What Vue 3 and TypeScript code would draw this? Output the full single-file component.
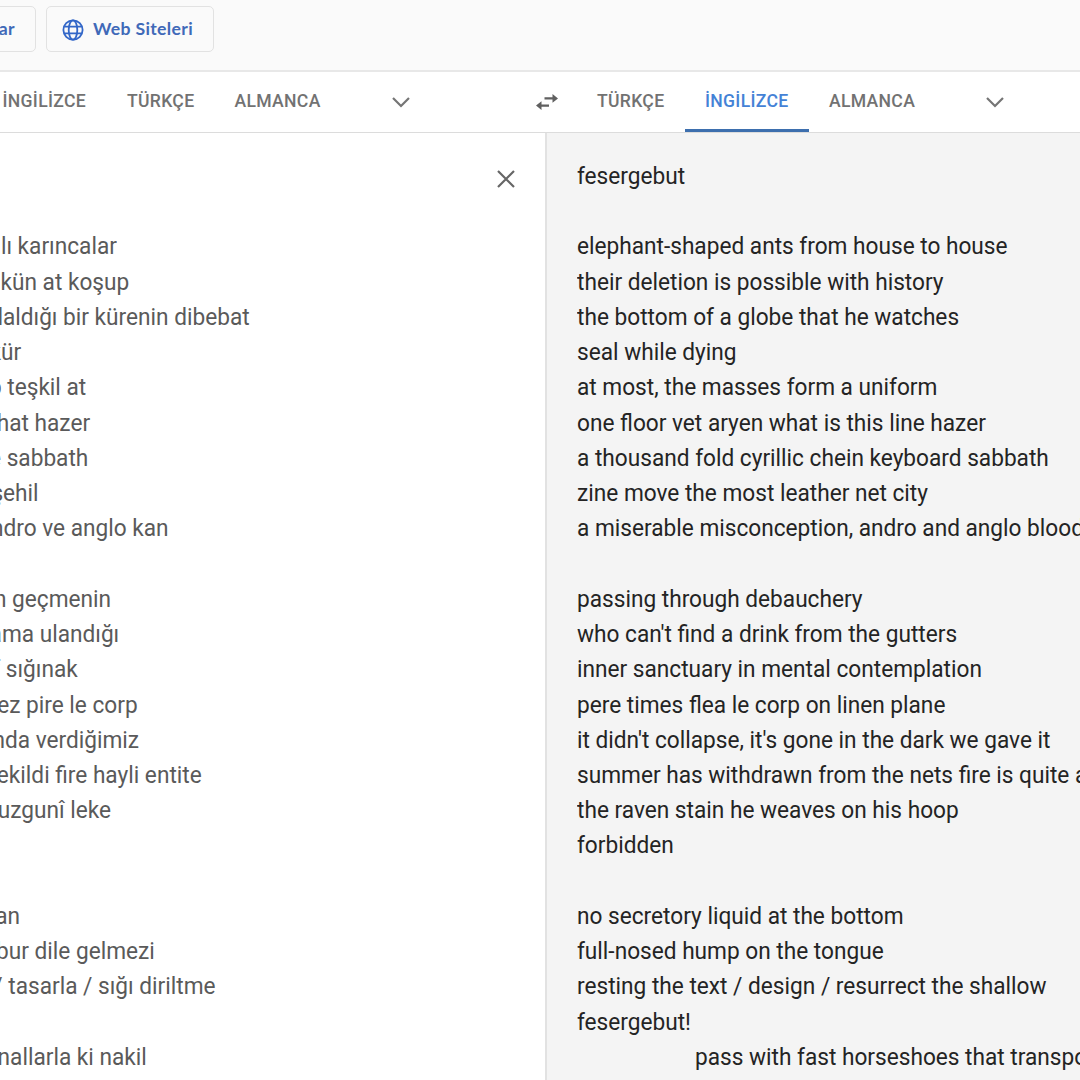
<script setup lang="ts">
interface SourceLine {
  text: string
  end: number
}

// Source lines run in from beyond the left edge; `end` is where each line stops.
const source: SourceLine[] = [
  { text: '', end: 0 },
  { text: '', end: 0 },
  { text: 'lı karıncalar', end: 116.5 },
  { text: 'kün at koşup', end: 129 },
  { text: 'daldığı bir kürenin dibebat', end: 249.5 },
  { text: 'kür', end: 21.2 },
  { text: 'p teşkil at', end: 86 },
  { text: 'hat hazer', end: 90 },
  { text: 'e sabbath', end: 88 },
  { text: 'şehil', end: 39 },
  { text: 'andro ve anglo kan', end: 168.5 },
  { text: '', end: 0 },
  { text: 'n geçmenin', end: 111.5 },
  { text: 'ama ulandığı', end: 119.5 },
  { text: 'f sığınak', end: 77.5 },
  { text: 'ez pire le corp', end: 138 },
  { text: 'nda verdiğimiz', end: 139 },
  { text: 'çekildi fire hayli entite', end: 202 },
  { text: 'kuzgunî leke', end: 111 },
  { text: '', end: 0 },
  { text: '', end: 0 },
  { text: 'an', end: 20.5 },
  { text: 'bur dile gelmezi', end: 154.5 },
  { text: '/ tasarla / sığı diriltme', end: 216 },
  { text: '', end: 0 },
  { text: 'nallarla ki nakil', end: 146.5 },
]

const translation: string[] = [
  'fesergebut',
  '',
  'elephant-shaped ants from house to house',
  'their deletion is possible with history',
  'the bottom of a globe that he watches',
  'seal while dying',
  'at most, the masses form a uniform',
  'one floor vet aryen what is this line hazer',
  'a thousand fold cyrillic chein keyboard sabbath',
  'zine move the most leather net city',
  'a miserable misconception, andro and anglo blood',
  '',
  'passing through debauchery',
  "who can't find a drink from the gutters",
  'inner sanctuary in mental contemplation',
  'pere times flea le corp on linen plane',
  "it didn't collapse, it's gone in the dark we gave it",
  'summer has withdrawn from the nets fire is quite a',
  'the raven stain he weaves on his hoop',
  'forbidden',
  '',
  'no secretory liquid at the bottom',
  'full-nosed hump on the tongue',
  'resting the text / design / resurrect the shallow',
  'fesergebut!',
  'pass with fast horseshoes that transport',
]
</script>

<template>
  <div class="page">
    <header class="modes">
      <button class="mode mode-docs">ar</button>
      <button class="mode mode-sites">
        <svg class="globe" viewBox="0 0 22 22" fill="none" stroke="#3367c8" stroke-width="1.8">
          <circle cx="11" cy="11" r="9.6" />
          <ellipse cx="11" cy="11" rx="4.3" ry="9.6" />
          <path d="M2 7.6h18M2 14.4h18" />
        </svg>
        <span>Web Siteleri</span>
      </button>
    </header>

    <nav class="langs">
      <div class="side side-source">
        <span class="lang l1">İNGİLİZCE</span>
        <span class="lang l2">TÜRKÇE</span>
        <span class="lang l3">ALMANCA</span>
        <svg class="chev" viewBox="0 0 20 12"><path d="M2 2l8 8 8-8" /></svg>
      </div>
      <svg class="swap" viewBox="0 0 24 18">
        <path class="line" d="M9.5 5.4H19M14 12.6H5" />
        <path class="head" d="M17.5 1L23 5.4l-5.5 4.4zM6.5 8.2L1 12.6 6.5 17z" />
      </svg>
      <div class="side side-target">
        <span class="lang r1">TÜRKÇE</span>
        <span class="lang r2 active">İNGİLİZCE</span>
        <span class="lang r3">ALMANCA</span>
        <svg class="chev" viewBox="0 0 20 12"><path d="M2 2l8 8 8-8" /></svg>
      </div>
    </nav>

    <main class="panes">
      <section class="pane source">
        <div class="lines">
          <p v-for="(line, i) in source" :key="i" class="line-row" :style="{ width: line.end + 'px' }">
            <span>{{ line.text }}</span>
          </p>
        </div>
        <svg class="close" viewBox="0 0 20 20"><path d="M2 2l16 16M18 2L2 18" /></svg>
      </section>
      <section class="pane target">
        <p v-for="(line, i) in translation" :key="i" class="line-row" :class="{ indented: i === 25 }">
          <span>{{ line }}</span>
        </p>
      </section>
    </main>
  </div>
</template>

<style>
body {
  margin: 0;
}
</style>

<style scoped>
.page {
  width: 1080px;
  height: 1080px;
  overflow: hidden;
  display: flex;
  flex-direction: column;
  background: #fff;
  font-family: Roboto, sans-serif;
}
.modes {
  box-sizing: border-box;
  flex: none;
  height: 70px;
  display: flex;
  gap: 10px;
  padding-top: 6px;
  background: #fafafa;
}
.mode {
  box-sizing: border-box;
  height: 46px;
  border: 1.5px solid #e2e2e2;
  border-radius: 5px;
  background: #fafafa;
  color: #4069b8;
  font: 700 17.6px/44px Lato, sans-serif;
  letter-spacing: 0.35px;
  display: flex;
  align-items: center;
  white-space: nowrap;
}
.mode-docs {
  width: 56px;
  margin-left: -20px;
  padding: 0 20px 0 0;
  justify-content: flex-end;
}
.mode-sites {
  width: 168px;
  padding: 0 0 0 15px;
  gap: 9px;
}
.globe {
  width: 22px;
  height: 22px;
  margin-top: 2px;
}
.langs {
  box-sizing: border-box;
  flex: none;
  height: 63px;
  display: flex;
  border-top: 2px solid #e8e8e8;
  border-bottom: 1px solid #dcdcdc;
}
.side {
  display: flex;
  align-items: center;
}
.side-source {
  width: 535px;
}
.side-target {
  flex: 1;
  margin-left: 20px;
}
.lang {
  box-sizing: border-box;
  flex: none;
  height: 60px;
  font-weight: 500;
  font-size: 17.6px;
  line-height: 58px;
  letter-spacing: 0.3px;
  color: #727272;
  white-space: nowrap;
}
.l1 { width: 125px; padding-left: 2.5px; }
.l2 { width: 107px; padding-left: 2px; }
.l3 { width: 158px; padding-left: 2.5px; }
.r1 { width: 106px; padding-left: 18px; }
.r2 { width: 123.5px; padding-left: 20px; }
.r3 { width: 175.5px; padding-left: 20.5px; }
.active {
  color: #4482d6;
  border-bottom: 3px solid #3d6fae;
}
.chev {
  width: 20px;
  height: 12px;
  margin-left: 1px;
  fill: none;
  stroke: #757575;
  stroke-width: 2.2;
}
.swap {
  width: 24px;
  height: 18px;
  margin-top: 21px;
}
.swap .line {
  stroke: #606060;
  stroke-width: 2.2;
}
.swap .head {
  fill: #606060;
}
.panes {
  flex: 1;
  display: flex;
  min-height: 0;
}
.pane {
  box-sizing: border-box;
  padding-top: 26px;
  overflow: hidden;
}
.source {
  width: 545px;
  display: flex;
  justify-content: space-between;
  color: #5a5a5a;
}
.target {
  flex: 1;
  padding-left: 30px;
  border-left: 2px solid #e2e2e2;
  background: #f4f4f4;
  color: #242424;
}
.line-row {
  margin: 0;
  height: 35.24px;
  display: flex;
  font-size: 23.8px;
  line-height: 35.24px;
  white-space: pre;
}
/* Slightly condensed reading face */
.line-row span {
  flex: none;
  transform: scaleX(0.9517);
  transform-origin: left center;
}
.source .line-row {
  justify-content: flex-end;
}
.source .line-row span {
  transform-origin: right center;
}
.indented {
  padding-left: 118px;
}
.close {
  flex: none;
  width: 20px;
  height: 20px;
  margin: 10px 29.5px 0 0;
  fill: none;
  stroke: #666;
  stroke-width: 2.2;
}
</style>
